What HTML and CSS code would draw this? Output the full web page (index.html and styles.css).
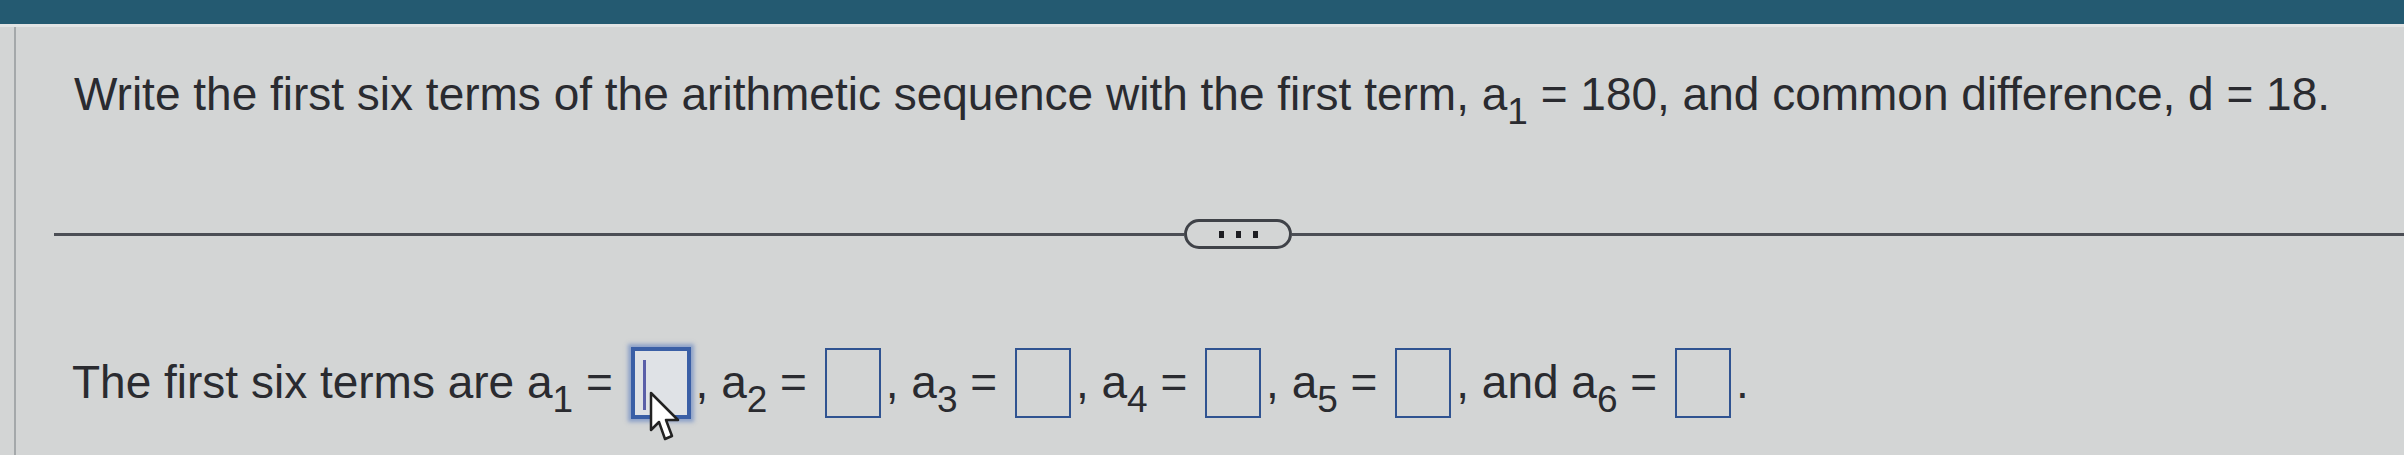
FILE: index.html
```html
<!DOCTYPE html>
<html>
<head>
<meta charset="utf-8">
<link rel="stylesheet" href="styles.css">
</head>
<body>
<div class="topbar"></div>
<div class="page">
  <p class="question">Write the first six terms of the arithmetic sequence with the first term, a<span class="sub">1</span> = 180, and common difference, d = 18.</p>
  <div class="divider">
    <span class="rule rule-left"></span>
    <span class="pill"><i class="dot"></i><i class="dot"></i><i class="dot"></i></span>
    <span class="rule rule-right"></span>
  </div>
  <p class="answer">The first six terms are a<span class="sub">1</span> = <span class="box focused"><span class="caret"></span><svg class="pointer" width="34" height="54" viewBox="0 0 34 54"><path d="M2 2 L2 39 L10 31 L16 48 L23 45 L17 29 L29 29 Z" fill="#fff" stroke="#222" stroke-width="2.5" stroke-linejoin="round"/></svg></span>, a<span class="sub">2</span> = <span class="box"></span>, a<span class="sub">3</span> = <span class="box"></span>, a<span class="sub">4</span> = <span class="box"></span>, a<span class="sub">5</span> = <span class="box"></span>, and a<span class="sub">6</span> = <span class="box"></span>.</p>
</div>
</body>
</html>
```
FILE: styles.css
```css
html, body {
  margin: 0;
  padding: 0;
}
body {
  width: 2404px;
  height: 455px;
  overflow: hidden;
  background: #d3d5d5;
  font-family: "Liberation Sans", Arial, sans-serif;
  color: #2a2b30;
}
.topbar {
  height: 24px;
  background: #245a71;
  border-bottom: 3px solid #e2e4e4;
}
.page {
  margin-left: 14px;
  border-left: 2px solid #a4a8aa;
  height: 428px;
}
.question {
  margin: 0;
  padding: 41px 0 0 58px;
  font-size: 46px;
  line-height: 52px;
  white-space: nowrap;
}
.sub {
  font-size: 37px;
  position: relative;
  top: 14px;
  line-height: 0;
}
.divider {
  display: flex;
  align-items: center;
  margin: 99px 0 0 38px;
}
.rule {
  height: 3px;
  background: #4b4e55;
}
.rule-left {
  width: 1130px;
}
.rule-right {
  flex: 1;
}
.pill {
  display: flex;
  align-items: center;
  justify-content: center;
  gap: 12px;
  width: 108px;
  height: 30px;
  border: 3px solid #3f4248;
  border-radius: 15px;
  box-sizing: border-box;
}
.dot {
  display: block;
  width: 5px;
  height: 7px;
  background: #1d1e22;
}
.answer {
  margin: 0;
  padding: 96px 0 0 56px;
  font-size: 46px;
  line-height: 74px;
  white-space: nowrap;
}
.box {
  display: inline-block;
  position: relative;
  width: 56px;
  height: 70px;
  border: 2.5px solid #2f5391;
  vertical-align: middle;
  margin: -6px 5px 0;
  box-sizing: border-box;
}
.focused {
  width: 60px;
  height: 72px;
  border: 4px solid #3a5fa6;
  box-shadow: 0 0 4px 3px rgba(70, 110, 190, 0.5);
  background: #dfe2e6;
}
.caret {
  position: absolute;
  left: 8px;
  top: 9px;
  width: 3px;
  height: 50px;
  background: #5a5fa8;
}
.pointer {
  position: absolute;
  left: 14px;
  top: 40px;
}
```
